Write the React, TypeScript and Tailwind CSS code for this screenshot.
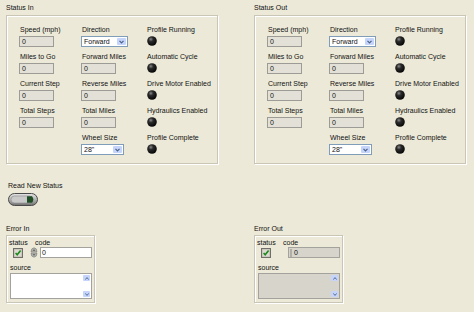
import React from 'react'

const font = { fontFamily: '"Liberation Sans", Arial, sans-serif' }

function Led() {
  return (
    <svg width="10" height="10" viewBox="0 0 10 10" className="ml-[1px] block">
      <defs>
        <radialGradient id="ledg" cx="38%" cy="32%" r="70%">
          <stop offset="0%" stopColor="#8a8a8a" />
          <stop offset="35%" stopColor="#2a2a2a" />
          <stop offset="100%" stopColor="#050505" />
        </radialGradient>
      </defs>
      <circle cx="5" cy="5" r="4.8" fill="url(#ledg)" />
    </svg>
  )
}

function Num() {
  return (
    <div className="h-[11px] w-[35px] border border-[#9c9b95] bg-[#e3e1d7] pl-[2px] leading-[9px]">0</div>
  )
}

function Ring({ text, w }: { text: string; w: string }) {
  return (
    <div className={`flex h-[11px] ${w} items-stretch border border-[#7f9db9] bg-white`}>
      <div className="flex-1 pl-[2px] leading-[9px]">{text}</div>
      <div className="m-[1px] flex w-[9px] items-center justify-center rounded-[1px] bg-[#c4d4fb]">
        <svg width="5" height="4" viewBox="0 0 5 4">
          <path d="M0.5 0.8 L2.5 2.8 L4.5 0.8" stroke="#4d6185" strokeWidth="1.2" fill="none" />
        </svg>
      </div>
    </div>
  )
}

function Cell({ label, children }: { label?: string; children?: React.ReactNode }) {
  return (
    <div className="flex h-[27px] flex-col">
      <div className="h-[9px] pl-[1px] leading-[9px] whitespace-nowrap">{label}</div>
      <div className="mt-[2px]">{children}</div>
    </div>
  )
}

function StatusPanel({ title }: { title: string }) {
  const rows: [string, string, string, React.ReactNode][] = [
    ['Speed (mph)', 'Direction', 'Profile Running', <Ring text="Forward" w="w-[47px]" />],
    ['Miles to Go', 'Forward Miles', 'Automatic Cycle', <Num />],
    ['Current Step', 'Reverse Miles', 'Drive Motor Enabled', <Num />],
    ['Total Steps', 'Total Miles', 'Hydraulics Enabled', <Num />],
  ]
  return (
    <div className="w-[212px]">
      <div className="h-[9px] leading-[9px]">{title}</div>
      <div className="mt-[3px] h-[149px] border border-[#c9c6b6] pl-[12px] pt-[9px] shadow-[inset_1px_1px_0_#ffffff,1px_1px_0_#ffffff]">
        <div className="grid grid-cols-[62px_65px_1fr]">
          {rows.map(([a, b, c, ctl]) => (
            <React.Fragment key={a}>
              <Cell label={a}>
                <Num />
              </Cell>
              <Cell label={b}>{ctl}</Cell>
              <Cell label={c}>
                <Led />
              </Cell>
            </React.Fragment>
          ))}
          <Cell />
          <Cell label="Wheel Size">
            <Ring text={'28"'} w="w-[43px]" />
          </Cell>
          <Cell label="Profile Complete">
            <Led />
          </Cell>
        </div>
      </div>
    </div>
  )
}

function Toggle() {
  return (
    <svg width="30" height="13" viewBox="0 0 30 13" className="block">
      <defs>
        <linearGradient id="tg" x1="0" y1="0" x2="0" y2="1">
          <stop offset="0%" stopColor="#e6e6e6" />
          <stop offset="60%" stopColor="#a9a9a9" />
          <stop offset="100%" stopColor="#6e6e6e" />
        </linearGradient>
      </defs>
      <rect x="0.5" y="0.5" width="29" height="12" rx="6" fill="url(#tg)" stroke="#4a4a4a" />
      <rect x="3" y="3" width="22" height="7" rx="3.5" fill="#c9c9c9" stroke="#8a8a8a" strokeWidth="0.6" />
      <path d="M19 3.2 H24 Q26.6 6.5 24 9.8 H19 Z" fill="#1f4d24" />
    </svg>
  )
}

function Check() {
  return (
    <svg width="10" height="10" viewBox="0 0 10 10" className="block">
      <rect x="0.5" y="0.5" width="9" height="9" fill="#b9b7ae" stroke="#6f6e69" />
      <rect x="1.5" y="1.5" width="7" height="7" fill="#dcdad0" />
      <path d="M2.6 5 L4.2 6.8 L7.6 2.6" stroke="#1d8a1d" strokeWidth="1.6" fill="none" />
    </svg>
  )
}

function Spinner() {
  return (
    <svg width="8" height="11" viewBox="0 0 8 11" className="block">
      <path d="M1 5 Q1 1 4 0.8 Q7 1 7 5 Z" fill="#b4b4b0" stroke="#7a7a76" strokeWidth="0.6" />
      <path d="M1 6 Q1 10 4 10.2 Q7 10 7 6 Z" fill="#b4b4b0" stroke="#7a7a76" strokeWidth="0.6" />
      <path d="M2.6 3.8 L4 2.2 L5.4 3.8 Z" fill="#555" />
      <path d="M2.6 7.2 L4 8.8 L5.4 7.2 Z" fill="#555" />
    </svg>
  )
}

function ScrollBtn({ up }: { up?: boolean }) {
  return (
    <div className="flex h-[6px] w-[7px] items-center justify-center rounded-[1px] bg-[#c4d4fb]">
      <svg width="4" height="3" viewBox="0 0 4 3">
        <path d={up ? 'M0.3 2.6 L2 0.6 L3.7 2.6' : 'M0.3 0.4 L2 2.4 L3.7 0.4'} stroke="#4d6185" strokeWidth="0.9" fill="none" />
      </svg>
    </div>
  )
}

function ErrorCluster({ title, out }: { title: string; out?: boolean }) {
  const field = out ? 'bg-[#d6d4cb] border-[#a3a29c]' : 'bg-white border-[#a3a29c]'
  return (
    <div className="w-[89px]">
      <div className="h-[9px] leading-[9px]">{title}</div>
      <div className="mt-[2px] h-[68px] border border-[#c9c6b6] pl-[2px] pt-[2px] shadow-[inset_1px_1px_0_#ffffff,1px_1px_0_#ffffff]">
        <div className="flex h-[9px] leading-[9px]">
          <div className="w-[26px]">status</div>
          <div>code</div>
        </div>
        <div className="flex items-center">
          <div className="ml-[4px] mt-[1px]">
            <Check />
          </div>
          <div className={`ml-[7px] ${out ? 'invisible' : ''}`}>
            <Spinner />
          </div>
          <div className={`ml-[2px] flex h-[11px] w-[52px] items-center border ${field}`}>
            {out && <div className="mx-[1px] h-[8px] w-[2px] bg-[#b0aea6]" />}
            <span className="pl-[1px] leading-[9px]">0</span>
          </div>
        </div>
        <div className="ml-[1px] mt-[5px] h-[9px] leading-[9px]">source</div>
        <div className={`ml-[1px] mt-[1px] flex h-[26px] w-[82px] justify-end border ${field}`}>
          <div className="flex flex-col justify-between py-[1px] pr-[1px]">
            <ScrollBtn up />
            <ScrollBtn />
          </div>
        </div>
      </div>
    </div>
  )
}

export default function App() {
  return (
    <div className="h-[312px] w-[474px] overflow-hidden bg-[#ece9d8] pl-[6px] pt-[3px] text-[7px] text-[#111]" style={font}>
      <div className="flex gap-[36px]">
        <StatusPanel title="Status In" />
        <StatusPanel title="Status Out" />
      </div>
      <div className="mt-[17px] flex">
        <div className="w-[248px]">
          <div className="ml-[2px] h-[9px] leading-[9px]">Read New Status</div>
          <div className="ml-[2px] mt-[3px]">
            <Toggle />
          </div>
          <div className="mt-[18px]">
            <ErrorCluster title="Error In" />
          </div>
        </div>
        <div className="pt-[43px]">
          <ErrorCluster title="Error Out" out />
        </div>
      </div>
    </div>
  )
}
